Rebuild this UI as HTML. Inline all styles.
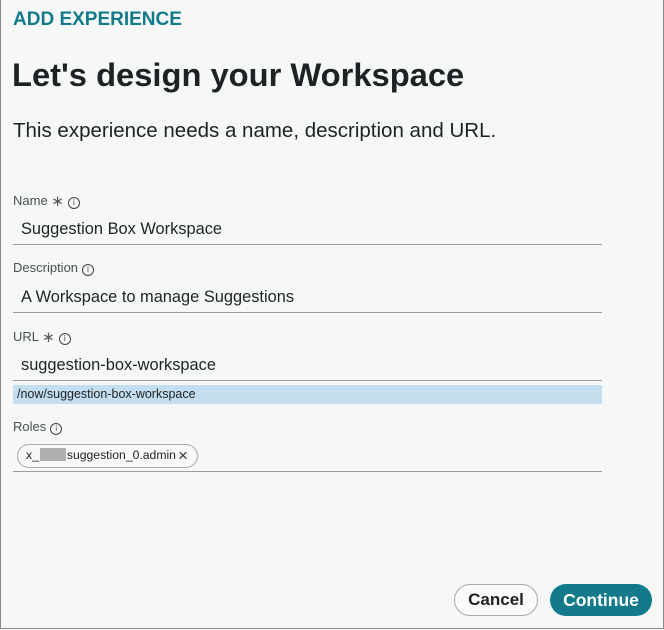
<!DOCTYPE html>
<html><head><style>
body{margin:0;width:664px;height:630px;background:#f6f7f7;font-family:"Liberation Sans",sans-serif;position:relative;overflow:hidden}
.frame{position:absolute;left:0;top:0;width:662px;height:628px;border:1px solid #8a8a8a;border-top:none;}
.a{position:absolute;white-space:nowrap}
.lbl{font-size:13px;color:#4a4f52}
.val{font-size:16.4px;color:#1e2326}
.line{position:absolute;left:13px;width:589px;height:1px;background:#9a9d9f}
.i{display:inline-block;width:10px;height:10px;border:1.2px solid #444;border-radius:50%;font-size:8px;line-height:10px;text-align:center;vertical-align:0px;margin-left:4px;color:#444;font-family:"DejaVu Sans",sans-serif}
.ast{font-size:15px;font-family:"DejaVu Sans",sans-serif;color:#555;vertical-align:-1px}
</style></head><body>
<div class="frame"></div>
<div class="a" style="left:13px;top:9px;font-size:19px;font-weight:bold;color:#137a8c">ADD EXPERIENCE</div>
<div class="a" style="left:12px;top:56px;font-size:32.7px;font-weight:bold;color:#1d2224">Let's design your Workspace</div>
<div class="a" style="left:13px;top:119px;font-size:20.5px;color:#1d2224">This experience needs a name, description and URL.</div>

<div class="a lbl" style="left:13px;top:192px">Name <span class="ast">∗</span><span class="i">i</span></div>
<div class="a val" style="left:21px;top:220px">Suggestion Box Workspace</div>
<div class="line" style="top:244px"></div>

<div class="a lbl" style="left:13px;top:260px">Description<span class="i">i</span></div>
<div class="a val" style="left:21px;top:288px">A Workspace to manage Suggestions</div>
<div class="line" style="top:312px"></div>

<div class="a lbl" style="left:13px;top:328px">URL <span class="ast">∗</span><span class="i">i</span></div>
<div class="a val" style="left:21px;top:356px">suggestion-box-workspace</div>
<div class="line" style="top:380px"></div>
<div class="a" style="left:13px;top:385px;width:589px;height:19px;background:#c4ddef;border-radius:2px"></div>
<div class="a" style="left:17px;top:387px;font-size:12.5px;color:#1d2224">/now/suggestion-box-workspace</div>

<div class="a lbl" style="left:13px;top:419px">Roles<span class="i">i</span></div>
<div class="a" style="left:17px;top:444px;width:179px;height:22px;border:1px solid #a9abad;border-radius:12px;background:#f8f8f8"></div>
<div class="a" style="left:26px;top:448px;font-size:12.2px;color:#1d2224">x_<span style="display:inline-block;width:26px;height:13px;background:#b0b0b0;vertical-align:-2px;margin:0 1px"></span>suggestion_0.admin</div>
<div class="a" style="left:178px;top:446px;font-size:17px;color:#333">×</div>
<div class="line" style="top:471px"></div>

<div class="a" style="left:454px;top:584px;width:82px;height:30px;border:1px solid #a9abad;border-radius:16px;background:#fafafa;font-size:17px;font-weight:bold;color:#1d2224;text-align:center;line-height:30px">Cancel</div>
<div class="a" style="left:550px;top:584px;width:102px;height:32px;border-radius:16px;background:#137a8c;font-size:17.5px;font-weight:bold;color:#fff;text-align:center;line-height:32px">Continue</div>
</body></html>
